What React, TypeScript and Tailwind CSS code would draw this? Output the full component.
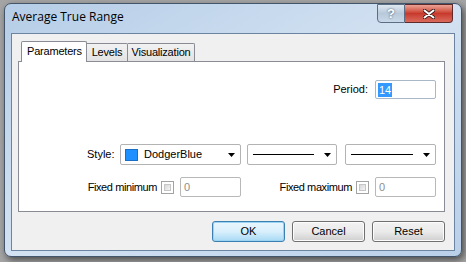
import * as React from "react";

function Caret() {
  return (
    <svg width="7" height="4" viewBox="0 0 7 4" className="shrink-0">
      <path d="M0 0h7L3.5 4z" fill="#000" />
    </svg>
  );
}

function LineCombo({ w }: { w: string }) {
  return (
    <div className={`${w} h-[21px] flex items-center bg-white border border-[#b3b3b3] rounded-[2px] pl-[5px] pr-[5px] gap-[10px]`}>
      <div className="flex-1 h-[1px] bg-black" />
      <Caret />
    </div>
  );
}

function Check() {
  return (
    <div className="w-[13px] h-[13px] shrink-0 border border-[#a3a3a3] bg-white p-[2px]">
      <div className="w-full h-full bg-gradient-to-br from-[#d8d8d8] to-[#f4f4f4] border border-[#c6c6c6]" />
    </div>
  );
}

function NumBox({ value }: { value: string }) {
  return (
    <div className="w-[61px] h-[20px] border border-[#b8b8b8] bg-white rounded-[2px] flex items-center pl-[3px] text-[#8d8d8d]">
      {value}
    </div>
  );
}

function Btn({ label, def }: { label: string; def?: boolean }) {
  return (
    <div
      className={
        def
          ? "w-[73px] h-[21px] rounded-[3px] border border-[#3c7fb1] bg-gradient-to-b from-[#eaf6fd] via-[#d9f0fc] to-[#a7d9f5] shadow-[inset_0_0_0_1px_#9bd3f3] flex items-center justify-center text-black"
          : "w-[73px] h-[21px] rounded-[3px] border border-[#707070] bg-gradient-to-b from-[#f2f2f2] via-[#ebebeb] to-[#cfcfcf] shadow-[inset_0_0_0_1px_#fcfcfc] flex items-center justify-center text-black"
      }
    >
      {label}
    </div>
  );
}

export default function App() {
  return (
    <div className="w-[466px] h-[262px] bg-[#a5a5a5] pl-[4px] pt-[3px] font-['Liberation_Sans',Arial,sans-serif] text-[11px] text-black">
      <div className="w-[458px] h-[254px] rounded-[7px] border border-[#42556b] bg-gradient-to-br from-[#b5cde7] via-[#d3e2f2] to-[#b9d0e9] shadow-[2px_3px_7px_rgba(0,0,0,0.55)] flex flex-col px-[6px] pb-[5px]">
        {/* title bar */}
        <div className="h-[29px] shrink-0 flex items-start justify-between">
          <div className="pt-[5px] pl-[1px] text-[12px] leading-[16px] font-['Open_Sans',sans-serif] text-black">
            Average True Range
          </div>
          <div className="flex mr-[2px]">
            <div className="w-[28px] h-[19px] rounded-bl-[4px] border border-[#5b6e84] bg-gradient-to-b from-[#dfe8f1] via-[#b8c9db] to-[#c9d9e9] flex items-center justify-center text-[13px] font-bold text-white [text-shadow:0_0_2px_#2d3c4f]">
              ?
            </div>
            <div className="w-[48px] h-[19px] rounded-br-[4px] border border-l-0 border-[#5e2a2a] bg-gradient-to-b from-[#eba295] via-[#c8392c] to-[#d96a5d] flex items-center justify-center">
              <svg width="12" height="10" viewBox="0 0 12 10">
                <path d="M1.5 1.5l9 7M10.5 1.5l-9 7" stroke="#3a1b1b" strokeWidth="3.6" strokeLinecap="round" />
                <path d="M1.5 1.5l9 7M10.5 1.5l-9 7" stroke="#fff" strokeWidth="2" strokeLinecap="round" />
              </svg>
            </div>
          </div>
        </div>

        {/* client */}
        <div className="flex-1 border border-[#6a84a2] bg-[#f0f0f0] flex flex-col pl-[6px] pt-[7px]">
          <div className="h-[20px] flex items-end pl-[3px]">
            <div className="relative z-10 -mb-[1px] h-[21px] w-[66px] border border-b-0 border-[#898c95] bg-white rounded-t-[2px] flex items-center pl-[5px] pb-[1px] tracking-[-0.2px]">
              Parameters
            </div>
            <div className="h-[18px] w-[41px] border border-b-0 border-l-0 border-[#898c95] bg-gradient-to-b from-[#f2f2f2] to-[#e3e3e3] rounded-tr-[2px] flex items-center justify-center tracking-[-0.2px]">
              Levels
            </div>
            <div className="h-[18px] w-[67px] border border-b-0 border-l-0 border-[#898c95] bg-gradient-to-b from-[#f2f2f2] to-[#e3e3e3] rounded-tr-[2px] flex items-center justify-center tracking-[-0.2px]">
              Visualization
            </div>
          </div>

          <div className="w-[427px] h-[151px] border border-[#898c95] bg-white flex flex-col">
            <div className="mt-[18px] flex justify-end items-center pr-[8px] gap-[7px]">
              <span>Period:</span>
              <div className="w-[61px] h-[19px] border border-[#a9b7c6] bg-white rounded-[2px] flex items-center pl-[2px]">
                <span className="bg-[#3399ff] text-white px-[1px] leading-[14px]">14</span>
              </div>
            </div>

            <div className="mt-[45px] flex items-center pl-[68px]">
              <span className="w-[33px]">Style:</span>
              <div className="w-[121px] h-[21px] flex items-center bg-white border border-[#b3b3b3] rounded-[2px] pl-[4px] pr-[5px]">
                <div className="w-[13px] h-[12px] bg-[#1e90ff] border border-[#1a6fc4]" />
                <span className="ml-[6px] flex-1">DodgerBlue</span>
                <Caret />
              </div>
              <div className="ml-[6px]">
                <LineCombo w="w-[90px]" />
              </div>
              <div className="ml-[8px]">
                <LineCombo w="w-[91px]" />
              </div>
            </div>

            <div className="mt-[12px] flex items-center pl-[66px]">
              <span className="w-[72px] shrink-0 whitespace-nowrap text-right tracking-[-0.4px]">Fixed minimum</span>
              <div className="ml-[4px]">
                <Check />
              </div>
              <div className="ml-[6px]">
                <NumBox value="0" />
              </div>
              <span className="ml-[31px] w-[80px] shrink-0 whitespace-nowrap text-right tracking-[-0.4px]">Fixed maximum</span>
              <div className="ml-[4px]">
                <Check />
              </div>
              <div className="ml-[6px]">
                <NumBox value="0" />
              </div>
            </div>
          </div>

          <div className="mt-[9px] flex gap-[7px] w-[427px] justify-end">
            <Btn label="OK" def />
            <Btn label="Cancel" />
            <Btn label="Reset" />
          </div>
        </div>
      </div>
    </div>
  );
}
